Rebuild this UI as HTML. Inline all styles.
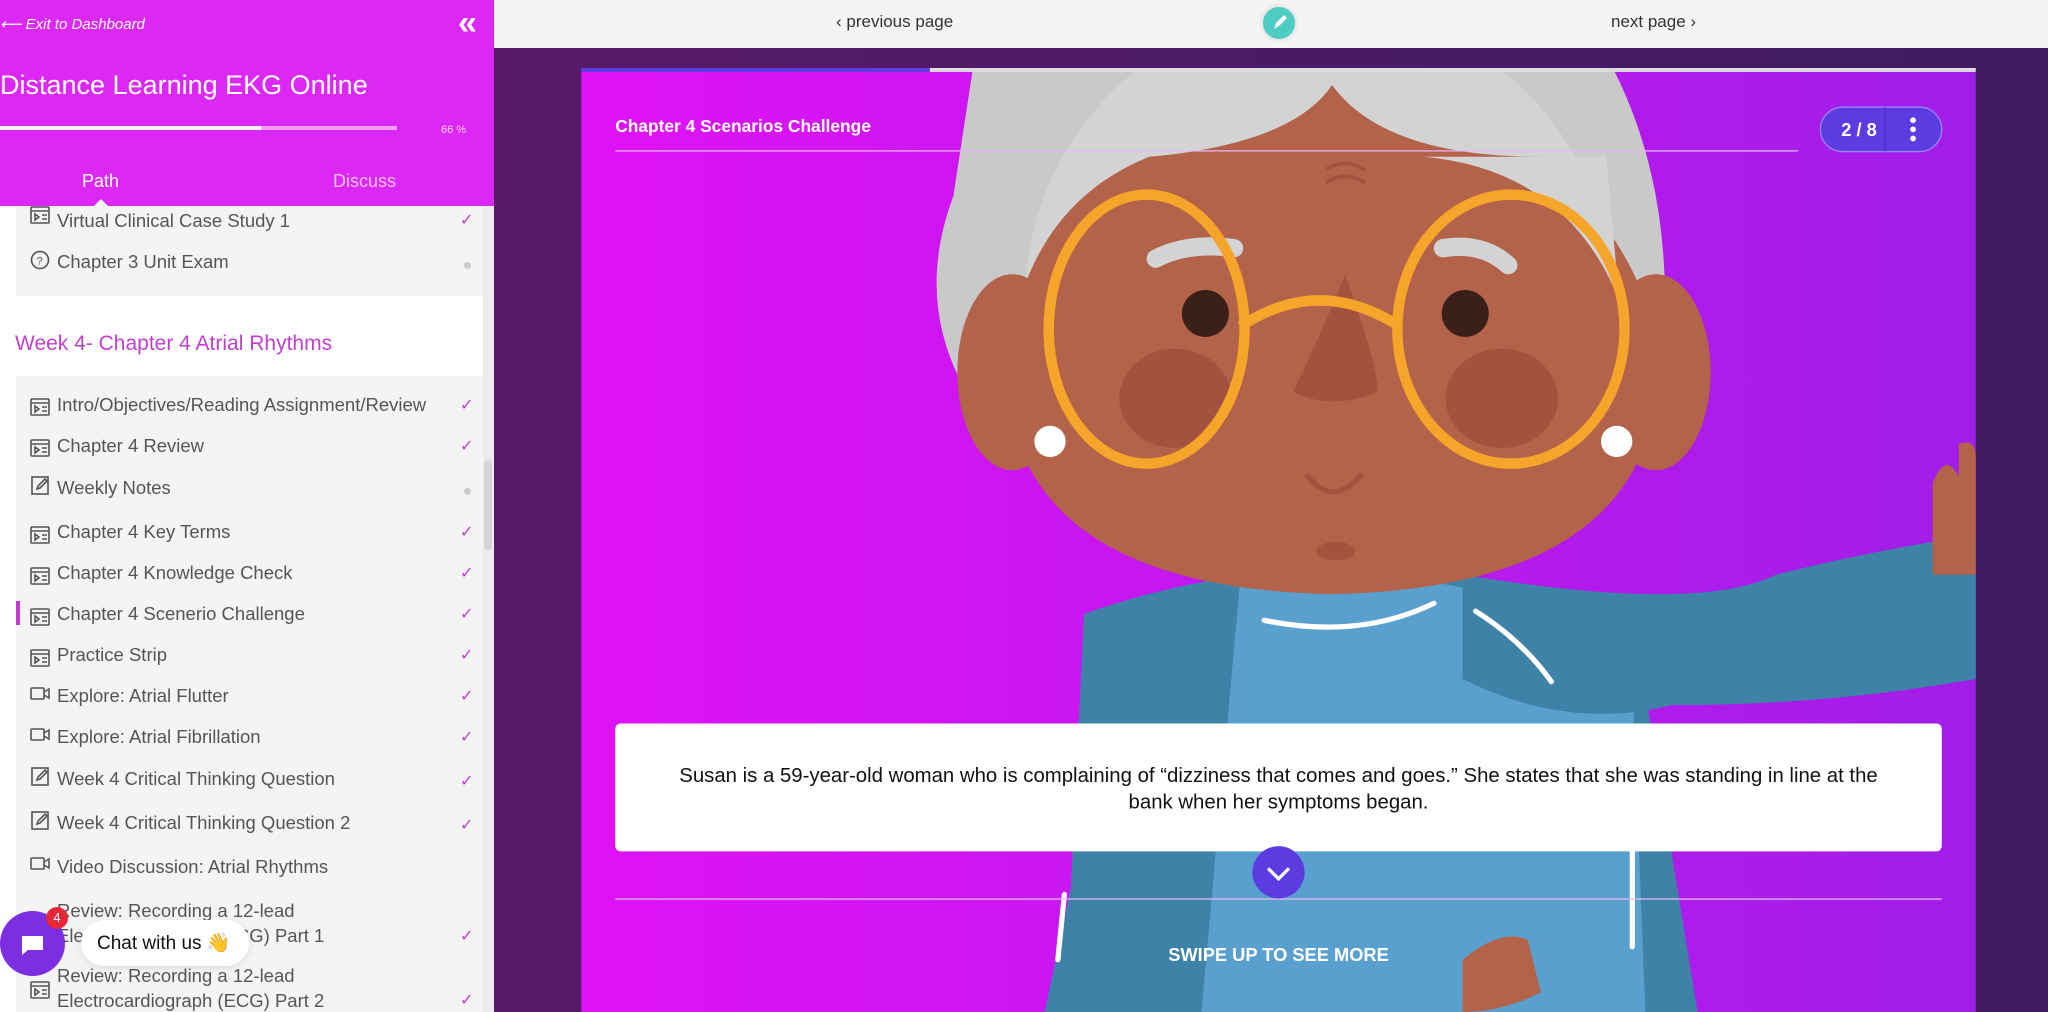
<!DOCTYPE html>
<html><head><meta charset="utf-8"><style>
*{margin:0;padding:0;box-sizing:border-box}
body{width:2048px;height:1012px;overflow:hidden;position:relative;font-family:"Liberation Sans",sans-serif;background:linear-gradient(90deg,#5f196c,#3f1b62)}
#side{position:absolute;left:0;top:0;width:494px;height:1012px;background:#fff;overflow:hidden}
#hdr{position:absolute;left:0;top:0;width:494px;height:206px;background:#dc28f4;color:#fff}
.abs{position:absolute}
#list{position:absolute;left:16px;top:206px;width:467px;height:806px;background:#f4f4f4}
.it{position:absolute;left:57px;font-size:18.5px;color:#555;line-height:25px;white-space:nowrap}
.ck{position:absolute;left:460px;color:#c63ad8;font-size:16px}
.dot{position:absolute;left:464px;width:7px;height:7px;border-radius:50%;background:#ccc}
#top{position:absolute;left:494px;top:0;width:1554px;height:48px;background:#f4f4f4}
</style></head><body>
<div id="top">
<div class="abs" style="left:342px;top:12px;font-size:17px;color:#333">‹ previous page</div>
<div class="abs" style="left:1117px;top:12px;font-size:17px;color:#333">next page ›</div>
<div class="abs" style="left:769px;top:7px;width:32px;height:32px;border-radius:50%;background:#4ecdc4;box-shadow:0 0 6px rgba(0,0,0,.15)">
<svg width="32" height="32" viewBox="0 0 32 32"><path d="M11 22l2-6 8-8 3 3-8 8z" fill="#fff"/></svg></div>
</div>
<div id="side">
<div id="list"></div>
<div class="abs" style="left:16px;top:296px;width:467px;height:80px;background:#fff"></div>
<div class="abs" style="left:483px;top:206px;width:11px;height:806px;background:#ececec"></div>
<div class="abs" style="left:484px;top:460px;width:8px;height:90px;background:#d5d5d5;border-radius:4px"></div>
<div id="hdr">
<div class="abs" style="left:0;top:15px;font-size:15px;font-style:italic">⟵ Exit to Dashboard</div>
<div class="abs" style="left:458px;top:4px;font-size:34px;font-weight:bold">«</div>
<div class="abs" style="left:0;top:70px;font-size:27px">Distance Learning EKG Online</div>
<div class="abs" style="left:0;top:126px;width:397px;height:4px;background:#f29ff9"></div>
<div class="abs" style="left:0;top:126px;width:261px;height:4px;background:#fff"></div>
<div class="abs" style="left:441px;top:124px;font-size:11px;color:#f8d0fb">66 %</div>
<div class="abs" style="left:82px;top:171px;font-size:18px">Path</div>
<div class="abs" style="left:333px;top:171px;font-size:18px;color:#f2c0f8">Discuss</div>
<div class="abs" style="left:94px;top:199px;width:0;height:0;border-left:7px solid transparent;border-right:7px solid transparent;border-bottom:7px solid #f4f4f4"></div>
</div>
<div class="abs" style="left:15px;top:332px;font-size:21px;color:#c040d0">Week 4- Chapter 4 Atrial Rhythms</div>
<div class="abs" style="left:16px;top:601px;width:4px;height:24px;background:#c63ad8"></div>
<svg class="abs" style="left:0;top:-5px" width="494" height="1012">
<g fill="none" stroke="#555" stroke-width="1.6">
<g id="s"><rect x="31" y="212" width="18" height="16" rx="1"/><path d="M31 216h18M35 219v6l4-3zM42 220h5M42 224h5"/></g>
<use href="#s" y="192"/><use href="#s" y="233"/><use href="#s" y="320"/><use href="#s" y="361"/><use href="#s" y="402"/><use href="#s" y="443"/><use href="#s" y="775"/>
<circle cx="40" cy="265" r="8.5"/><text x="36.5" y="269.5" font-size="11" fill="#555" stroke="none">?</text>
<g id="n"><rect x="32" y="482" width="16" height="17"/><path d="M37 494l1-3 7-7 2 2-7 7z"/></g>
<use href="#n" y="291"/><use href="#n" y="335"/>
<g id="v"><rect x="31" y="693" width="13" height="11" rx="1"/><path d="M44 697l5-3v9l-5-3"/></g>
<use href="#v" y="41"/><use href="#v" y="170"/>
</g></svg>
<div class="it" style="top:208px">Virtual Clinical Case Study 1</div><div class="ck" style="top:210px">✓</div>
<div class="it" style="top:249px">Chapter 3 Unit Exam</div><div class="dot" style="top:262px"></div>
<div class="it" style="top:392px">Intro/Objectives/Reading Assignment/Review</div><div class="ck" style="top:395px">✓</div>
<div class="it" style="top:433px">Chapter 4 Review</div><div class="ck" style="top:436px">✓</div>
<div class="it" style="top:475px">Weekly Notes</div><div class="dot" style="top:488px"></div>
<div class="it" style="top:519px">Chapter 4 Key Terms</div><div class="ck" style="top:522px">✓</div>
<div class="it" style="top:560px">Chapter 4 Knowledge Check</div><div class="ck" style="top:563px">✓</div>
<div class="it" style="top:601px">Chapter 4 Scenerio Challenge</div><div class="ck" style="top:604px">✓</div>
<div class="it" style="top:642px">Practice Strip</div><div class="ck" style="top:645px">✓</div>
<div class="it" style="top:683px">Explore: Atrial Flutter</div><div class="ck" style="top:686px">✓</div>
<div class="it" style="top:724px">Explore: Atrial Fibrillation</div><div class="ck" style="top:727px">✓</div>
<div class="it" style="top:766px">Week 4 Critical Thinking Question</div><div class="ck" style="top:771px">✓</div>
<div class="it" style="top:810px">Week 4 Critical Thinking Question 2</div><div class="ck" style="top:815px">✓</div>
<div class="it" style="top:854px">Video Discussion: Atrial Rhythms</div>
<div class="it" style="top:898px">Review: Recording a 12-lead<br>Electrocardiograph (ECG) Part 1</div><div class="ck" style="top:926px">✓</div>
<div class="it" style="top:963px">Review: Recording a 12-lead<br>Electrocardiograph (ECG) Part 2</div><div class="ck" style="top:990px">✓</div>
<div class="abs" style="left:81px;top:920px;width:168px;height:46px;border-radius:23px;background:#fff;box-shadow:0 2px 8px rgba(0,0,0,.1);font-size:19px;color:#111;padding:11px 16px">Chat with us 👋</div>
<div class="abs" style="left:0;top:911px;width:65px;height:65px;border-radius:50%;background:#7b2fe0">
<svg width="65" height="65"><path d="M22 25h21v14H28l-6 5z" fill="#fff"/></svg></div>
<div class="abs" style="left:46px;top:907px;width:22px;height:22px;border-radius:50%;background:#e8263a;color:#fff;font-size:13px;text-align:center;line-height:22px">4</div>
</div>
<svg class="abs" style="left:581px;top:68px" width="1395" height="944" viewBox="445 52 1068 723">
<defs><linearGradient id="bg" x1="0" x2="1"><stop offset="0" stop-color="#e012f6"/><stop offset="1" stop-color="#a11ee8"/></linearGradient></defs>
<rect x="445" y="52" width="1068" height="723" fill="url(#bg)"/>
<path d="M745 52h490 Q1275 130 1275 230 L1250 300 H740 Q700 230 730 150z" fill="#c9c9c9"/>
<ellipse cx="1010" cy="230" rx="225" ry="225" fill="#d3d3d3"/>
<path d="M820 680 L830 470 Q1030 400 1250 470 L1300 775 H800z" fill="#3e82a8"/>
<path d="M950 440 Q1020 430 1120 450 L1250 520 1260 775 H920z" fill="#5aa0cf"/>
<path d="M1120 440 Q1300 470 1360 440 Q1440 420 1513 410 V520 Q1400 540 1280 540 Q1200 560 1120 520z" fill="#3e82a8"/>
<path d="M1480 440 V370 Q1490 345 1500 365 V340 Q1513 335 1513 350 V440z" fill="#b3634a"/>
<path d="M1120 735 Q1150 710 1170 720 L1180 760 Q1150 775 1120 775z" fill="#b3634a"/>
<ellipse cx="775" cy="285" rx="42" ry="75" fill="#b3634a"/>
<ellipse cx="1268" cy="285" rx="42" ry="75" fill="#b3634a"/>
<path d="M1020 65 Q1060 120 1180 120 Q1270 200 1270 290 Q1260 450 1020 455 Q780 450 770 290 Q780 160 880 120 Q990 110 1020 65z" fill="#b3634a"/>
<path d="M1090 120 Q1200 130 1240 230 L1230 120z" fill="#d3d3d3"/>
<circle cx="804" cy="338" r="12" fill="#fff"/><circle cx="1238" cy="338" r="12" fill="#fff"/>
<ellipse cx="900" cy="305" rx="43" ry="38" fill="#a35240"/><ellipse cx="1150" cy="305" rx="43" ry="38" fill="#a35240"/>
<path d="M1030 210 Q1055 280 1055 300 Q1020 315 990 300 Q1010 260 1030 210z" fill="#a35240"/>
<ellipse cx="1023" cy="422" rx="15" ry="7" fill="#a35240"/>
<path d="M1000 363 Q1020 390 1043 363" stroke="#a35240" stroke-width="4" fill="none"/>
<path d="M1015 130 Q1030 120 1045 130 M1015 140 Q1030 130 1045 140" stroke="#a35240" stroke-width="3" fill="none"/>
<path d="M885 198 Q910 185 945 190" stroke="#d3d3d3" stroke-width="14" stroke-linecap="round" fill="none"/>
<path d="M1105 190 Q1135 185 1155 203" stroke="#d3d3d3" stroke-width="14" stroke-linecap="round" fill="none"/>
<circle cx="923" cy="240" r="18" fill="#3a2018"/><circle cx="1122" cy="240" r="18" fill="#3a2018"/>
<g fill="none" stroke="#f5a52a" stroke-width="8"><ellipse cx="878" cy="252" rx="75" ry="103"/><ellipse cx="1157" cy="252" rx="87" ry="103"/><path d="M950 250 Q1010 210 1072 250"/></g>
<g fill="none" stroke="#fff" stroke-width="4" stroke-linecap="round"><path d="M968 475 Q1040 490 1098 462"/><path d="M1130 468 Q1165 490 1188 522"/><path d="M1250 640 V725"/><path d="M815 685 L810 735"/></g>
<rect x="445" y="52" width="267" height="3" fill="#5b3ce0"/><rect x="712" y="52" width="801" height="3" fill="#ddd"/>
<text x="471" y="101" font-family="Liberation Sans" font-weight="bold" font-size="13.3" fill="#fff">Chapter 4 Scenarios Challenge</text>
<rect x="471" y="115" width="906" height="1" fill="#e6b8f4"/>
<rect x="1394" y="82" width="93" height="34" rx="17" fill="#5b3ce0" stroke="#9a84f2"/>
<rect x="1443" y="82" width="1" height="34" fill="#4a2fc0"/>
<text x="1410" y="104" font-family="Liberation Sans" font-weight="bold" font-size="14" fill="#fff">2 / 8</text>
<circle cx="1465" cy="92" r="2.2" fill="#fff"/><circle cx="1465" cy="99" r="2.2" fill="#fff"/><circle cx="1465" cy="106" r="2.2" fill="#fff"/>
<rect x="471" y="554" width="1016" height="98" rx="4" fill="#fff"/>
<text x="979" y="599" text-anchor="middle" font-family="Liberation Sans" font-size="15.6" fill="#111">Susan is a 59-year-old woman who is complaining of “dizziness that comes and goes.” She states that she was standing in line at the</text>
<text x="979" y="619" text-anchor="middle" font-family="Liberation Sans" font-size="15.6" fill="#111">bank when her symptoms began.</text>
<rect x="471" y="688" width="1016" height="1" fill="#e0b8f0"/>
<circle cx="979" cy="668" r="20" fill="#5b3ce0"/>
<path d="M971 665l8 8 8-8" stroke="#fff" stroke-width="2.5" fill="none"/>
<text x="979" y="736" text-anchor="middle" font-family="Liberation Sans" font-weight="bold" font-size="14" fill="#fff">SWIPE UP TO SEE MORE</text>
</svg>
</body></html>
